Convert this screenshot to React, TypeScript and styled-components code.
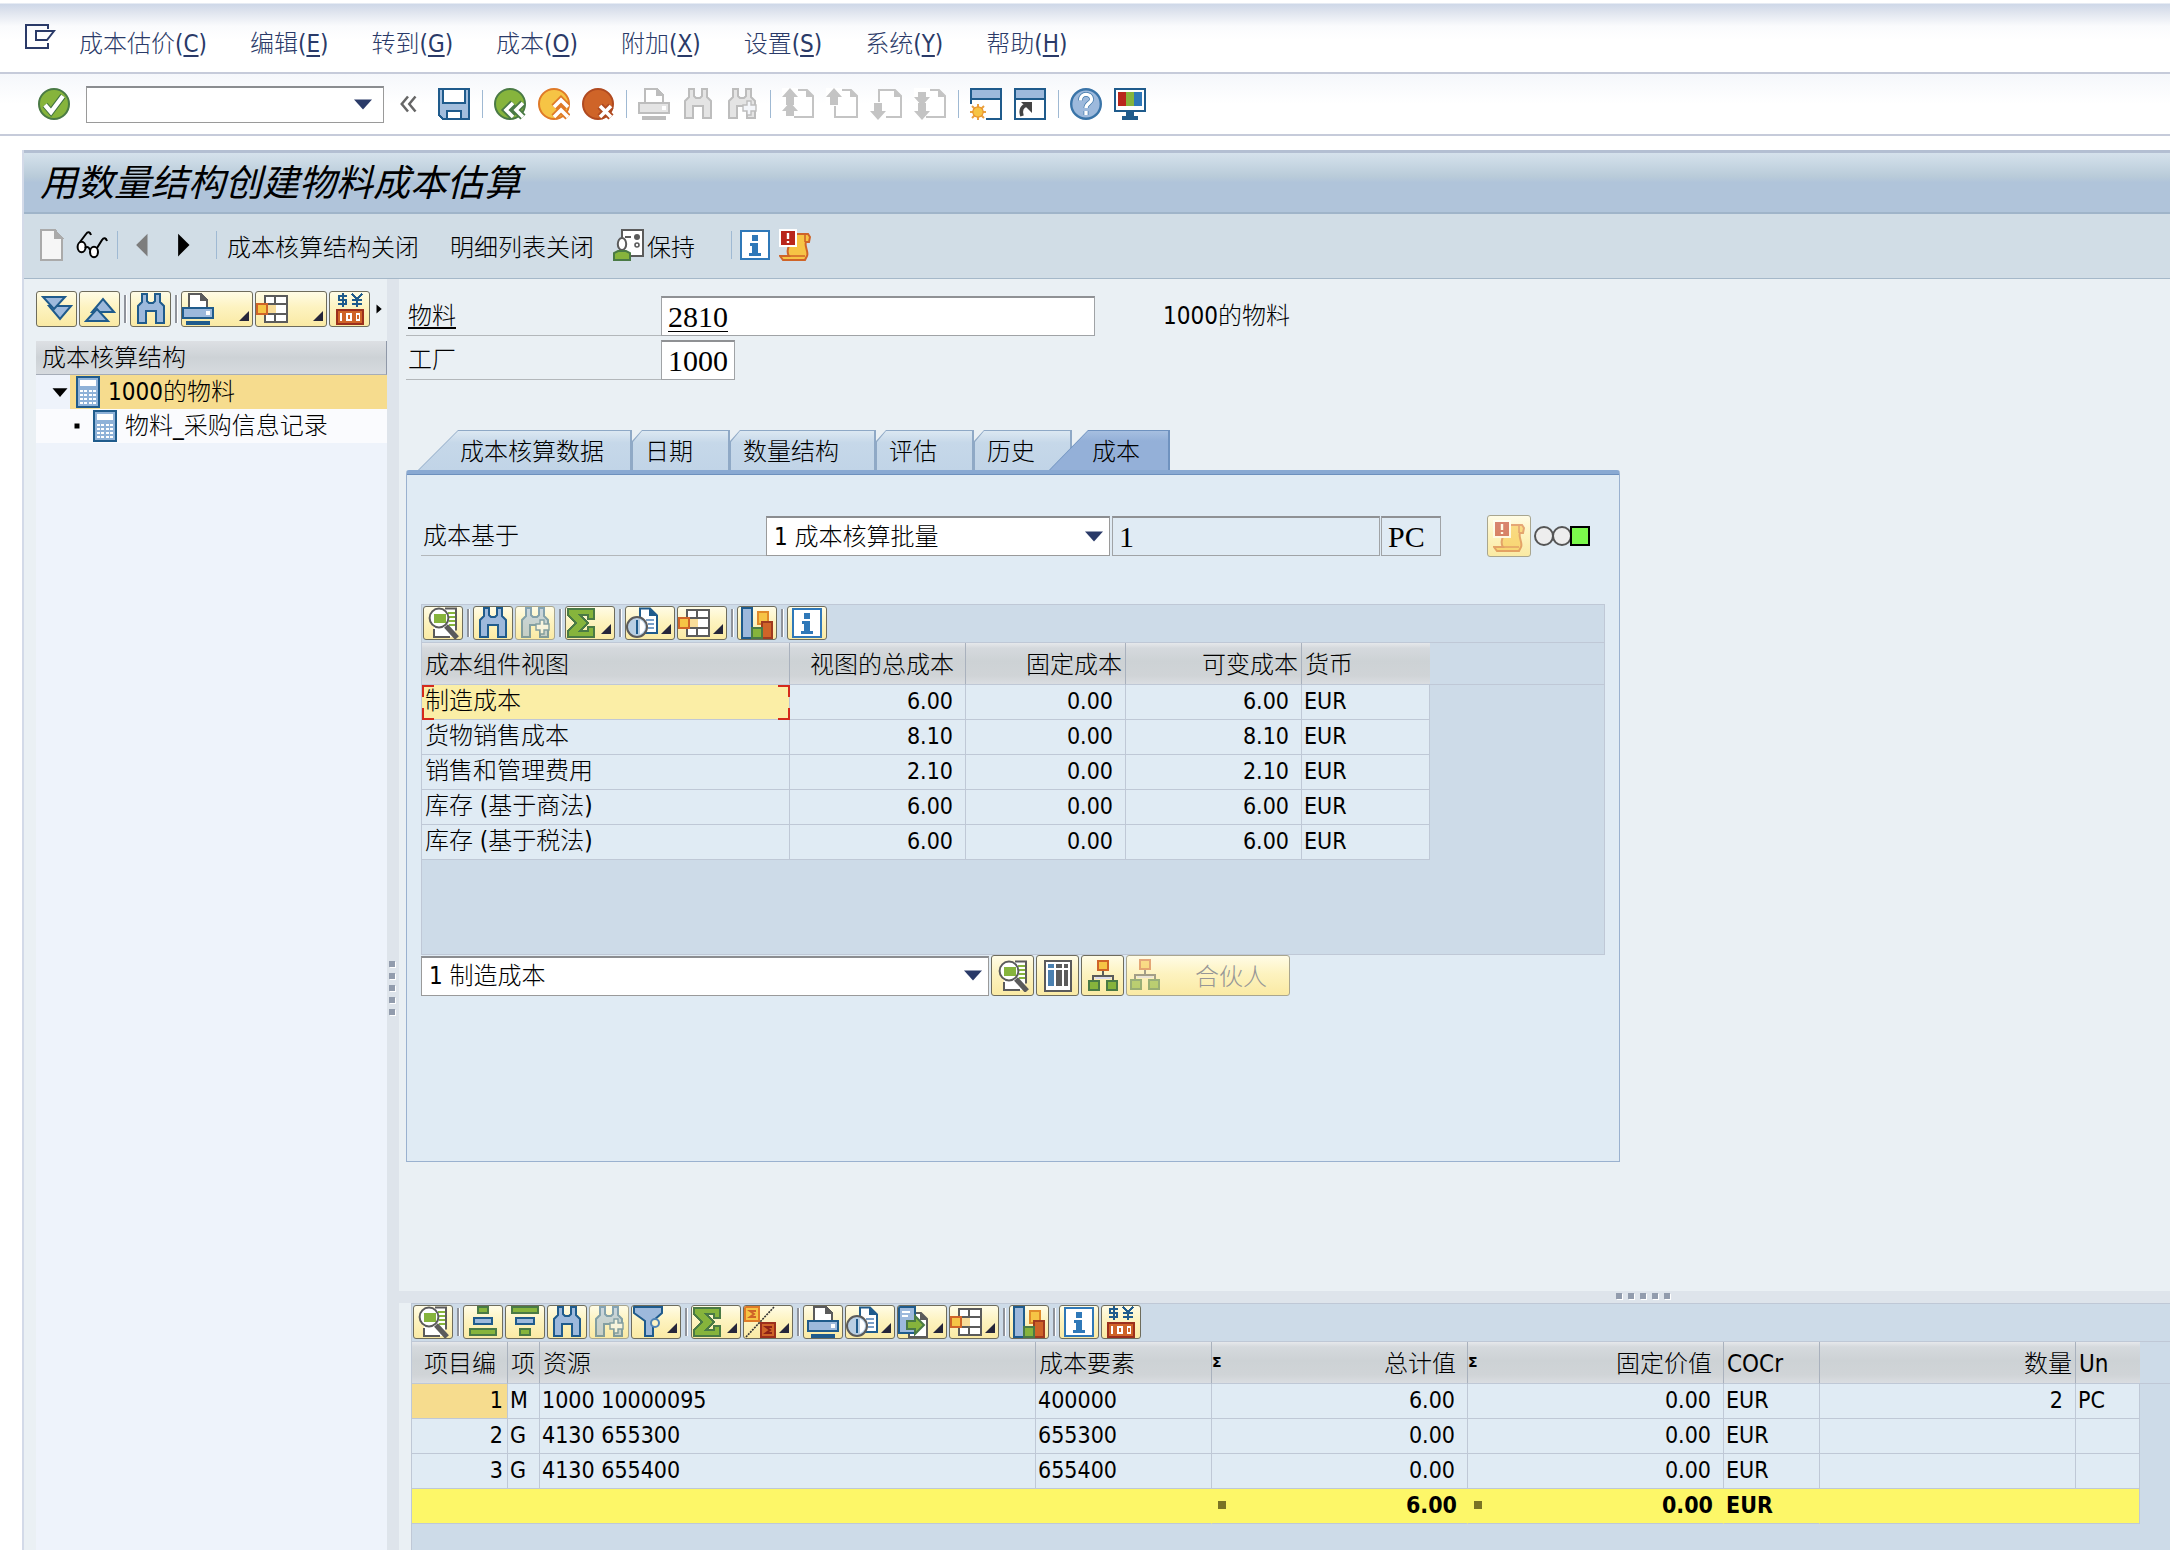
import React, { ReactNode } from 'react';
import styled, { createGlobalStyle, css } from 'styled-components';

const ui = `"DejaVu Sans Condensed", "Noto Sans CJK SC", sans-serif`;
const serif = `"Liberation Serif", "Noto Sans CJK SC", serif`;

const c = {
  page: '#eaf0f4',
  bar: '#d1dde6',
  grid: '#cddbe8',
  cell: '#e0ebf4',
  line: '#bfc8d6',
  split: '#dee4eb',
  navy: '#2a3a68',
  blue: '#1f5b8c',
  sky: '#9db9dc',
  dark: '#5b5b5b',
  green: '#86b43c',
  leaf: '#4a7a45',
  orange: '#cf6428',
  amber: '#f6c445',
  red: '#b9261c',
};

const Global = createGlobalStyle`
  * { box-sizing: border-box; }
  body { margin: 0; background: #fff; font-family: ${ui}; font-weight: 300; font-size: 24px; color: #000; }
  button, input, select { font: inherit; color: inherit; margin: 0; border-radius: 0; }
  button { padding: 0; border: 0; background: none; cursor: pointer; }
`;

/* ---------- icons, drawn on a 16 x 16 grid ---------- */

const Svg = styled.svg<{ $s: number }>`
  display: block;
  flex: none;
  width: ${p => p.$s}px;
  height: ${p => p.$s}px;
`;
type IconProps = { children?: ReactNode; size?: number; smooth?: boolean };
const Icon = ({ children, size = 32, smooth }: IconProps) => (
  <Svg $s={size} viewBox="0 0 16 16" fill="none" shapeRendering={smooth ? 'auto' : 'crispEdges'} aria-hidden="true">
    {children}
  </Svg>
);

const Binoculars = ({ a = c.blue, b = c.sky, plus }: { a?: string; b?: string; plus?: boolean }) => (
  <Icon smooth>
    <path d="M3.5.5h2.5v3.5l1 1h2l1-1v-3.5h2.5v4l2 2v8.500h-4v-6h-5v6h-4v-8.500l2-2z" fill={b} stroke={a} />
    {plus && <path d="M10.500 6.500h2v2h2.500v3h-2.500v2h-2v-2h-2v-3h2z" fill="#f4f6fa" stroke={a} strokeWidth=".7" />}
  </Icon>
);
const Printer = ({ a = c.blue, b = c.sky, p = c.dark }: { a?: string; b?: string; p?: string }) => (
  <Icon>
    <path d="M3.500 7V.5h6l3 3V7" fill="#fff" stroke={p} />
    <path d="M9 0l4 4H9z" fill={p} />
    <rect x=".5" y="7.500" width="15" height="5" fill={b} stroke={a} />
    <rect x="12" y="9" width="2" height="2" fill="#fff" />
    <rect x="2" y="14" width="12" height="2" fill={a} />
  </Icon>
);
const Details = () => (
  <Icon smooth>
    <path d="M3.500 9v6h9l1.500-3V1H8z" fill="#fff" />
    <path d="M3.500 11v4h8" stroke={c.dark} />
    <path d="M9 .7h5.500v11" stroke={c.dark} />
    <path d="M10.500 3H14M11 5h3M11 7h3M11 9h3" stroke={c.green} />
    <circle cx="6" cy="5.500" r="4.700" fill="#fff" stroke={c.dark} />
    <rect x="3.500" y="3.500" width="6" height="4.500" fill={c.green} />
    <path d="M9.500 9.500l5.500 6" stroke={c.dark} strokeWidth="2.600" />
  </Icon>
);
const Sum = () => (
  <Icon>
    <path d="M1 1h13v5h-3V4H7l4 4-4 4h4v-2h3v5H1v-3l4-4-4-4z" fill={c.green} stroke={c.leaf} />
  </Icon>
);
const Subtotal = () => (
  <Icon smooth>
    <rect x=".5" y=".5" width="7" height="7" fill={c.amber} stroke="#df7a28" />
    <path d="M6 2.500H3l2 1.500-2 1.500h3" stroke={c.orange} />
    <path d="M1 15.500L15 .5" stroke="#333" strokeWidth=".8" strokeDasharray="1 .5" />
    <rect x="8.500" y="8.500" width="7" height="7" fill={c.orange} stroke="#9c2f1c" />
    <path d="M14 10.500h-3l2 1.500-2 1.500h3" stroke="#8c2216" />
  </Icon>
);
const Preview = () => (
  <Icon smooth>
    <path d="M7 .7h5l3.500 3.500v8.800H7z" fill="#fff" stroke={c.blue} />
    <path d="M11.500.5l4 4h-4z" fill={c.blue} />
    <path d="M10 6.500h4M11 8.500h3M11 10.500h3" stroke="#7aa0c8" />
    <circle cx="5.500" cy="10" r="5" fill="#b9cfe4" stroke={c.dark} />
    <path d="M7 6.500c1.500.5 2.500 2 2.500 3.500S8.500 13 7 13.500z" fill="#fff" />
    <path d="M5.500 6.500v7" stroke={c.blue} />
  </Icon>
);
const Layout = () => (
  <Icon>
    <path d="M4.500 1.500h11v13h-11z" fill="#fff" stroke={c.dark} />
    <path d="M9.500 1v14M4 5.500h12M4 10.500h12M15.500 1v14" stroke={c.dark} />
    <rect x="6" y="6" width="4" height="4" fill="#f8dd9a" />
    <rect x=".5" y="5.500" width="5" height="5" fill={c.amber} stroke={c.orange} />
  </Icon>
);
const Chart = () => (
  <Icon>
    <rect x=".5" y=".5" width="5" height="15" fill={c.sky} stroke={c.blue} />
    <rect x="8.500" y="2.500" width="5" height="6" fill={c.amber} stroke="#e08a2a" />
    <rect x="10.500" y="7.500" width="5" height="8" fill={c.orange} stroke="#a03a20" />
    <rect x="5.500" y="10.500" width="5" height="5" fill={c.green} stroke={c.leaf} />
  </Icon>
);
const Info = () => (
  <Icon>
    <rect x="1" y="1" width="14" height="14" fill="#fff" stroke="#2f78b8" strokeWidth="1" />
    <rect x="6.500" y="3" width="3" height="3" fill="#2f78b8" />
    <path d="M5.500 7h4v5h1.500v1.500h-6V12h1.500V8.500h-1z" fill="#2f78b8" />
  </Icon>
);
const Currency = () => (
  <Icon>
    <path d="M6.500 1.500H2.500v2h3.500v2H2M4.500 0v7" stroke={c.blue} strokeWidth="1.200" />
    <path d="M9 .5l2.500 2.500L14 .5M11.500 3v4M9 3.500h5M9 5.500h5" stroke={c.blue} strokeWidth="1.200" />
    <rect x="1.500" y="8.500" width="13" height="7" fill={c.orange} stroke="#9c2f1c" />
    <path d="M3 14v-4h1v4zM6 14v-4h3v4zM11 14v-4h2v4z" fill="#fff" />
    <path d="M7.500 11v2M12 11v2" stroke={c.orange} />
  </Icon>
);
const SortUp = () => (
  <Icon>
    <rect x="5.500" y=".5" width="5" height="3" fill={c.green} stroke={c.leaf} />
    <rect x="3.500" y="6" width="9" height="3" fill={c.sky} stroke={c.blue} />
    <rect x="1.500" y="11.500" width="13" height="3" fill={c.green} stroke={c.leaf} />
  </Icon>
);
const SortDown = () => (
  <Icon>
    <rect x="1.500" y=".5" width="13" height="3" fill={c.green} stroke={c.leaf} />
    <rect x="3.500" y="6" width="9" height="3" fill={c.sky} stroke={c.blue} />
    <rect x="5.500" y="11.500" width="5" height="3" fill={c.green} stroke={c.leaf} />
  </Icon>
);
const Filter = () => (
  <Icon smooth>
    <path d="M1 .5h14v3l-4.500 4v7.500h-4V7.500L1 3.500z" fill={c.sky} stroke={c.blue} />
    <circle cx="11.500" cy="8.500" r="2" fill="#fdf3c4" stroke="#4f83b5" />
  </Icon>
);
const Export = () => (
  <Icon smooth>
    <path d="M5.500 3.500h6l3 3v9h-9z" fill="#fff" stroke={c.dark} />
    <path d="M11 3l4 4h-4z" fill={c.dark} />
    <path d="M.5.500h8v13h-8z" fill={c.sky} stroke={c.blue} />
    <path d="M2 3h4M2 5h3" stroke="#fff" />
    <path d="M4.500 7.500h4V5l4.500 4.500L8.500 14v-2.500h-4z" fill={c.green} stroke={c.leaf} />
  </Icon>
);
const DoubleTri = ({ up }: { up?: boolean }) => (
  <Icon smooth>
    <g transform={up ? 'matrix(1 0 0 -1 0 16)' : undefined} stroke={c.blue} fill={c.sky}>
      <path d="M4 6.500h11l-5.500 6.500z" />
      <path d="M1 2h11L6.500 8z" />
    </g>
  </Icon>
);
const ColumnsIcon = () => (
  <Icon>
    <rect x="1.500" y=".5" width="13" height="15" fill="#fff" stroke={c.dark} />
    <path d="M3 2h3v2H3zM3 5h3v8H3z" fill="#4a80b0" />
    <path d="M7 2h3v2H7zM11 2h2v2h-2zM7 5h3v8H7zM11 5h2v8h-2z" fill={c.dark} />
  </Icon>
);
const Hierarchy = () => (
  <Icon>
    <path d="M8 5v3M3 11V8h10v3" stroke={c.dark} />
    <path d="M4 9h8" stroke="#dcdcec" />
    <rect x="5.500" y=".5" width="5" height="4.500" fill={c.amber} stroke={c.orange} />
    <rect x="1" y="10.500" width="5" height="4.500" fill={c.green} stroke={c.leaf} />
    <rect x="10" y="10.500" width="5" height="4.500" fill={c.green} stroke={c.leaf} />
  </Icon>
);
const Scroll = () => (
  <Icon smooth>
    <path d="M6.500 2.500h8l1 1.500-.5 2.500h-1.500c-1 2 1.500 5 .5 7l-1 2H2l-1.500-2h4.500c-2-3 1-6 1.500-11z" fill={c.amber} stroke={c.orange} />
    <path d="M.5 13.500h12.500M13 3v3.500" stroke={c.orange} strokeWidth=".8" />
    <rect x="0" y="0" width="9" height="9" fill="#fff" />
    <rect x="1" y="1" width="7" height="7" fill={c.red} />
    <path d="M4.500 2v3M4.500 6v1" stroke="#fff" strokeWidth="1.200" />
  </Icon>
);
const Calculator = () => (
  <Icon>
    <rect x="2.500" y=".5" width="11" height="15" fill="#8fb2d8" stroke={c.blue} />
    <rect x="4" y="2" width="8" height="3" fill="#fff" />
    <path d="M4 7.500h8M4 9.500h8M4 11.500h8M4 13.500h8" stroke="#fff" strokeDasharray="1.400 .8" />
  </Icon>
);
const MenuMark = () => (
  <Icon smooth>
    <path d="M12 3.500V1.500H1v11.500h11v-2.500" stroke={c.navy} />
    <path d="M6 4.500h9l-3.500 4.500H6z" stroke={c.navy} />
  </Icon>
);
const Check = () => (
  <Icon smooth>
    <circle cx="8" cy="8" r="7.500" fill={c.green} stroke={c.leaf} />
    <path d="M3.500 8.500l3 3.500 6-8" stroke="#3f7040" strokeWidth="3.200" />
    <path d="M3.500 8.500l3 3.500 6-8" stroke="#fff" strokeWidth="2.200" />
  </Icon>
);
const Save = () => (
  <Icon>
    <path d="M.5.500h15v15H2.500l-2-2z" fill="#a3bedd" stroke={c.blue} />
    <rect x="2.500" y=".5" width="11" height="7" fill="#fff" stroke={c.blue} />
    <rect x="4.500" y="11.500" width="7" height="4" fill="#fff" stroke={c.blue} />
  </Icon>
);
type RoundProps = { fill: string; ring: string; mark: string };
const Round = ({ fill, ring, mark }: RoundProps) => (
  <Icon smooth>
    <circle cx="8" cy="8" r="7.500" fill={fill} stroke={ring} />
    <path d={mark} stroke={ring} strokeWidth="3.600" />
    <path d={mark} stroke="#fff" strokeWidth="1.800" />
  </Icon>
);
const Page = ({ up, down, both }: { up?: boolean; down?: boolean; both?: boolean }) => (
  <Icon smooth>
    <path d="M4.500 1h8l3 3v10.500h-11z" fill="#fff" stroke="#c4c4c4" />
    <path d="M12 .5l4 4h-4z" fill="#c4c4c4" />
    <rect x={0} y={up ? 0 : 7} width="8" height={both || down ? 9 : 9} fill="#fff" />
    {both && <rect x="0" y="0" width="8" height="16" fill="#fff" />}
    {up && <path d="M4 0l4 4.500H6v4H2v-4H0z" fill="#c4c4c4" />}
    {up && both && <path d="M4 7l4 4.500H6V14H2v-2.500H0z" fill="#c4c4c4" />}
    {down && <path d="M4 16l4-4.500H6v-4H2v4H0z" fill="#c4c4c4" />}
    {down && both && <path d="M4 9l4-4.500H6V2H2v2.500H0z" fill="#c4c4c4" />}
    {both && <path d="M6 14.500h6" stroke="#c4c4c4" />}
  </Icon>
);
const WindowIcon = ({ link }: { link?: boolean }) => (
  <Icon smooth>
    <rect x=".5" y=".5" width="15" height="15" fill="#fff" stroke={c.blue} />
    <rect x=".5" y=".5" width="15" height="5" fill={c.sky} stroke={c.blue} />
    {link ? (
      <>
        <path d="M4 14c-1-3 0-5 2.500-5.500" stroke="#444" strokeWidth="1.800" />
        <path d="M3.500 7H9v5.500z" fill="#444" />
      </>
    ) : (
      <>
        <rect x="0" y="8" width="8" height="8" fill="#fff" />
        <path d="M4 8v8M0 12h8M1 9l6 6M7 9l-6 6" stroke="#e9a040" />
        <circle cx="4" cy="12" r="2.600" fill={c.amber} stroke="#e9922c" strokeWidth=".6" />
      </>
    )}
  </Icon>
);
const Help = () => (
  <Icon smooth>
    <circle cx="8" cy="8" r="7.400" fill={c.sky} stroke="#3a74a8" strokeWidth="1.200" />
    <path d="M5.200 6.200c0-4 5.600-3.800 5.600-.6 0 2-2.800 2-2.800 4.400M8 11.500v2" stroke="#3a74a8" strokeWidth="2.400" />
    <path d="M5.200 6.200c0-4 5.600-3.800 5.600-.6 0 2-2.800 2-2.800 4.400M8 11.500v2" stroke="#fff" strokeWidth="1.700" />
  </Icon>
);
const Monitor = () => (
  <Icon>
    <rect x=".5" y=".5" width="15" height="11" fill="#fff" stroke={c.blue} />
    <rect x="2" y="2" width="4" height="7" fill={c.red} />
    <rect x="6" y="2" width="4" height="7" fill={c.green} />
    <rect x="10" y="2" width="4" height="7" fill="#2f78b8" />
    <path d="M6 12h4v2h2v2H4v-2h2z" fill={c.blue} />
  </Icon>
);
const NewDoc = () => (
  <Icon>
    <path d="M2.500.500h7l3.500 4.500v10.500h-10.500z" fill="#f6f6f6" stroke="#aaa" />
    <path d="M9 0l5 5H9z" fill="#aaa" />
  </Icon>
);
const Glasses = () => (
  <Icon smooth>
    <ellipse cx="2.800" cy="9" rx="2" ry="2.600" fill="#fff" stroke="#000" />
    <ellipse cx="9" cy="11.500" rx="2" ry="2.600" fill="#fff" stroke="#000" />
    <path d="M4.500 9.500c1-1 2-.5 2.500 1M2 6.500L5 2.500c1-1.500 2-1 2.500.5M10.500 9.500l2.500-4c1-1.500 2-1 2.500.5" stroke="#000" />
  </Icon>
);
const Hold = () => (
  <Icon smooth>
    <rect x="4.500" y=".5" width="10.500" height="13" fill="#fff" stroke={c.dark} />
    <path d="M6 4h3" stroke={c.dark} />
    <circle cx="12" cy="4" r="1.500" fill={c.dark} />
    <circle cx="12" cy="8" r="1" fill="#fff" stroke={c.dark} strokeWidth=".8" />
    <ellipse cx="4.500" cy="7.500" rx="2.100" ry="3" fill="#fff" stroke={c.dark} />
    <path d="M.5 15.500V12l2-1h4l2 1v3.500z" fill={c.green} stroke={c.leaf} />
  </Icon>
);
const Tri = ({ d, color, size }: { d: string; color: string; size: number }) => (
  <Icon smooth size={size}>
    <path d={d} fill={color} />
  </Icon>
);

/* ---------- shell ---------- */

const Shell = styled.div`
  min-height: 100vh;
  display: flex;
  flex-direction: column;
`;
const MenuBar = styled.nav`
  height: 74px;
  padding: 10px 24px 0;
  display: flex;
  align-items: center;
  background: linear-gradient(#fff 0 3px, #ced8e8 4px, #dfe4ee 12px, #fafbfd 26px, #fff 40px);
  border-bottom: 2px solid #c6cbda;
`;
const MenuIcon = styled.button`
  margin-right: 23px;
  padding-bottom: 6px;
`;
const MenuItem = styled.button`
  margin-right: 43px;
  color: ${c.navy};
  white-space: nowrap;
  u { text-underline-offset: 3px; text-decoration-thickness: 2px; }
`;
const SystemBar = styled.div`
  height: 62px;
  padding: 0 32px;
  display: flex;
  align-items: center;
  background: linear-gradient(#f5f7fb, #fff 30px);
  border-bottom: 2px solid #c6cbda;
`;
const SysButton = styled.button<{ $w?: number }>`
  width: ${p => p.$w ?? 44}px;
  height: 40px;
  display: grid;
  place-items: center;
  color: #666;
  &:disabled { cursor: default; }
`;
const Rule = styled.span<{ $w: number }>`
  width: ${p => p.$w}px;
  height: 28px;
  flex: none;
  background: linear-gradient(#9fb9d3, #9fb9d3) center / 1px 100% no-repeat;
`;
const Combo = styled.span<{ $w: number; $h?: number; $ml?: number; $inset?: number }>`
  display: grid;
  flex: none;
  width: ${p => p.$w}px;
  height: ${p => p.$h ?? 40}px;
  margin-left: ${p => p.$ml ?? 0}px;
  border: 1px solid #9a9a9a;
  border-top: 2px solid #8b8d90;
  background: #fff;
  align-items: center;
  & > * { grid-area: 1 / 1; }
  & > svg { justify-self: end; margin-right: ${p => p.$inset ?? 6}px; pointer-events: none; }
  select, input { width: 100%; height: 100%; border: 0; background: none; padding: 0 7px; appearance: none; outline: none; }
`;
const Frame = styled.div`
  flex: 1;
  margin: 14px 0 0 22px;
  border-left: 2px solid #d3dae8;
  display: flex;
  flex-direction: column;
`;
const Title = styled.h1`
  margin: 0;
  height: 64px;
  padding: 2px 16px 0;
  display: flex;
  align-items: center;
  border-top: 3px solid #b3bfd2;
  border-bottom: 2px solid #9fb4c9;
  background: linear-gradient(#d5e2ec, #b9cbd9 40%, #b0c4da 50%, #b0c4da);
  font: italic 400 37px/48px ${ui};
`;
const AppBar = styled.div`
  height: 65px;
  padding: 0 8px 2px;
  display: flex;
  align-items: center;
  background: ${c.bar};
  border-bottom: 1px solid #a5b8c9;
`;
const AppButton = styled.button<{ $w?: number; $gap?: number }>`
  display: flex;
  align-items: center;
  justify-content: ${p => (p.$w ? 'center' : 'flex-start')};
  gap: 2px;
  width: ${p => (p.$w ? `${p.$w}px` : 'auto')};
  margin-right: ${p => p.$gap ?? 0}px;
  white-space: nowrap;
`;
const Main = styled.div`
  flex: 1;
  display: flex;
  background: ${c.page};
`;
const Side = styled.aside`
  width: 363px;
  flex: none;
  padding: 12px 0 0 12px;
  display: flex;
  flex-direction: column;
`;
const VSplit = styled.div`
  width: 12px;
  flex: none;
  padding: 682px 0 0 2px;
  display: flex;
  flex-direction: column;
  gap: 6px;
  background: ${c.split};
`;
const HSplit = styled.div`
  height: 12px;
  flex: none;
  padding: 2px 0 0 1217px;
  display: flex;
  gap: 6px;
  background: ${c.split};
`;
const Dot = styled.i`
  width: 6px;
  height: 6px;
  background: #929cad;
  box-shadow: 1px 1px 0 #fff;
`;
const Work = styled.main`
  flex: 1;
  min-width: 0;
  display: flex;
  flex-direction: column;
`;

/* ---------- yellow buttons ---------- */

const Tools = styled.div`
  display: flex;
  align-items: center;
  gap: 2px;
`;
const Yellow = styled.button<{ $w: number; $h: number; $split?: boolean }>`
  position: relative;
  width: ${p => p.$w}px;
  height: ${p => p.$h}px;
  flex: none;
  overflow: hidden;
  display: flex;
  align-items: center;
  justify-content: ${p => (p.$split ? 'flex-start' : 'center')};
  border: 1px solid #6e6c5c;
  border-radius: 3px;
  background: linear-gradient(#fffce6, #fdf3c0 45%, #faeaa4);
  ${p => p.$split && css`
    &::after {
      content: '';
      position: absolute;
      right: 3px;
      bottom: 5px;
      border: 5px solid transparent;
      border-right-color: #26263a;
      border-bottom-color: #26263a;
    }
  `}
  &:disabled { border-color: #a9a68f; color: #969696; cursor: default; }
  &:disabled > svg { opacity: 0.55; }
`;
const Partner = styled(Yellow)`
  justify-content: flex-start;
  gap: 34px;
  padding: 0 0 2px 2px;
`;
const Sep = styled.span`
  width: 6px;
  height: 28px;
  flex: none;
  background: linear-gradient(90deg, #8f939b 2px, #fff 2px) center / 3px 100% no-repeat;
`;

type Tool = { name: string; icon?: ReactNode; split?: boolean; off?: boolean };
const SEP: Tool = { name: '' };
type ToolbarProps = { items: Tool[]; w: number; sw: number; h: number };
const Toolbar = ({ items, w, sw, h }: ToolbarProps) => (
  <>
    {items.map((t, i) =>
      t.icon ? (
        <Yellow key={i} type="button" aria-label={t.name} $w={t.split ? sw : w} $h={h} $split={t.split} disabled={t.off}>
          {t.icon}
        </Yellow>
      ) : (
        <Sep key={i} />
      ),
    )}
  </>
);

/* ---------- tree ---------- */

const TreeHead = styled.div`
  height: 34px;
  margin-top: 14px;
  padding-left: 6px;
  line-height: 34px;
  background: linear-gradient(#dde0e4, #cdd2d6 50%, #d6dade);
  border-right: 1px solid #8f98a8;
  border-bottom: 1px solid #a6adb8;
`;
const Tree = styled.ul`
  margin: 0;
  padding: 0;
  list-style: none;
  flex: 1;
  background: #eef3fb;
`;
const TreeRow = styled.li<{ $level: number; $on?: boolean }>`
  height: 34px;
  display: flex;
  align-items: center;
  padding-left: ${p => 14 + p.$level * 17}px;
  gap: 2px;
  background: ${p => (p.$on ? 'linear-gradient(90deg, #eef3fb 34px, #f6dc8e 34px)' : '#fafbfe')};
`;
const TreeText = styled.span`
  margin-left: 2px;
  line-height: 34px;
  white-space: nowrap;
`;

/* ---------- form ---------- */

const Top = styled.section`
  padding: 17px 7px 129px;
`;
const Row = styled.div<{ $mb: number }>`
  height: 40px;
  margin-bottom: ${p => p.$mb}px;
  display: flex;
`;
const Label = styled.label<{ $w: number; $u?: boolean }>`
  width: ${p => p.$w}px;
  flex: none;
  padding-left: 2px;
  line-height: 40px;
  border-bottom: 1px solid #b3b7ba;
  ${p => p.$u && 'text-decoration: underline; text-decoration-thickness: 2px; text-underline-offset: 3px;'}
`;
const Field = styled.input<{ $w: number; $u?: boolean; $gap?: number }>`
  width: ${p => p.$w}px;
  margin-left: ${p => p.$gap ?? 0}px;
  height: 40px;
  padding: 0 6px;
  border: 1px solid #a0a3a6;
  border-top: 2px solid #8f9194;
  outline: none;
  background: #fff;
  font-family: ${serif};
  font-size: 30px;
  font-weight: 400;
  ${p => p.$u && 'text-decoration: underline; text-decoration-thickness: 1px; text-underline-offset: 4px;'}
  &:read-only { background: transparent; }
`;
const Note = styled.span`
  margin-left: 68px;
  line-height: 40px;
`;

/* ---------- tabs ---------- */

const TabList = styled.div`
  height: 40px;
  padding-left: 12px;
  display: flex;
`;
type TabShape = 'first' | 'mid' | 'active';
const shapes: Record<TabShape, { outer: string; inner: string; pad: string }> = {
  first: {
    outer: 'polygon(0 100%, 40px 0, 100% 0, 100% 100%)',
    inner: 'polygon(0 100%, 39px 0, 100% 0, 100% 100%)',
    pad: '0 28px 2px 42px',
  },
  mid: {
    outer: 'polygon(0 11px, 10px 0, 100% 0, 100% 100%, 0 100%)',
    inner: 'polygon(0 11px, 9px 0, 100% 0, 100% 100%, 0 100%)',
    pad: '0 37px 2px 13px',
  },
  active: {
    outer: 'polygon(0 100%, 39px 0, 100% 0, 100% 100%)',
    inner: 'polygon(0 100%, 38px 0, 100% 0, 100% 100%)',
    pad: '0 30px 2px 43px',
  },
};
const Tab = styled.button<{ $shape: TabShape }>`
  position: relative;
  z-index: 0;
  height: 40px;
  padding: ${p => shapes[p.$shape].pad};
  margin-left: ${p => (p.$shape === 'active' ? '-23px' : '0')};
  white-space: nowrap;
  &::before, &::after {
    content: '';
    position: absolute;
    z-index: -1;
    inset: 0;
    background: ${p => (p.$shape === 'active' ? '#6f92bf' : '#8fa9c6')};
    clip-path: ${p => shapes[p.$shape].outer};
  }
  &::after {
    inset: 1px 2px 0 1px;
    background: ${p => (p.$shape === 'active' ? 'linear-gradient(#a6bfe0, #94b0d8 25%)' : 'linear-gradient(#dce8f2, #c6d8e9 30%, #c1d4e7)')};
    clip-path: ${p => shapes[p.$shape].inner};
  }
`;
const Panel = styled.div`
  width: 1214px;
  max-width: 100%;
  min-height: 692px;
  padding: 42px 14px 0;
  border: 1px solid #9ab1cf;
  border-top: 4px solid #89a9d2;
  box-shadow: inset 0 1px 0 #6d90bd;
  border-radius: 3px 3px 0 0;
  background: ${c.cell};
`;
const Alert = styled.span`
  margin-left: 46px;
  display: flex;
  align-items: center;
  gap: 3px;
`;
const Lights = styled.svg`
  width: 58px;
  height: 24px;
`;

/* ---------- grids ---------- */

const Grid = styled.section<{ $grow?: boolean }>`
  border: 1px solid ${c.line};
  ${p => (p.$grow ? 'flex: 1; margin-left: 12px; border-right: 0; border-bottom: 0;' : 'min-height: 351px;')}
  background: ${c.grid};
`;
const GridBar = styled(Tools)`
  height: 38px;
  padding: 0 1px 1px;
  border-bottom: 1px solid ${c.line};
`;
const GridBody = styled.div`
  display: flex;
`;
const Filler = styled.div`
  flex: 1;
  height: 42px;
  border-bottom: 1px solid ${c.line};
`;
const Table = styled.table`
  width: min-content;
  flex: none;
  table-layout: fixed;
  border-collapse: separate;
  border-spacing: 0;
`;
const Th = styled.th<{ $r?: number }>`
  position: relative;
  height: 42px;
  padding: 2px ${p => p.$r ?? 0}px 0 3px;
  text-align: ${p => (p.$r !== undefined ? 'right' : 'left')};
  font: 300 24px/38px ${ui};
  white-space: nowrap;
  overflow: hidden;
  background: linear-gradient(#e6e8eb, #d5d9dd 5px, #cdd2d5 45%, #d0d4d7 80%, #dadde1);
  border-right: 1px solid #a9b1bd;
  border-bottom: 1px solid ${c.line};
  &:last-child { border-right: 0; }
`;
const Sigma = styled.b`
  position: absolute;
  left: 0;
  top: 4px;
  font-family: "DejaVu Sans", sans-serif;
  font-size: 14px;
  font-weight: 700;
  line-height: 32px;
`;
const Td = styled.td<{ $r?: number; $mark?: 'cell' | 'row' }>`
  position: relative;
  height: 35px;
  padding: 0 ${p => p.$r ?? 0}px 2px 2px;
  text-align: ${p => (p.$r !== undefined ? 'right' : 'left')};
  font: 400 23px/30px ${ui};
  white-space: nowrap;
  background: ${p => (p.$mark === 'cell' ? '#fbeea6' : p.$mark === 'row' ? '#f6dc8e' : c.cell)};
  border-right: 1px solid ${c.line};
  border-bottom: 1px solid ${c.line};
`;
const NameTd = styled(Td)`
  padding-left: 3px;
  font: 300 24px/30px ${ui};
`;
const TotalTd = styled(Td)`
  background: #fdf768;
  font-weight: 700;
  border-right-color: #fdf768;
  &:last-child { border-right-color: ${c.line}; }
`;
const Square = styled.i`
  position: absolute;
  left: 6px;
  top: 12px;
  width: 8px;
  height: 8px;
  background: #7a7424;
`;
const Corners = styled.span`
  position: absolute;
  inset: 0 -1px -1px 0;
  --r: linear-gradient(#d42a1c, #d42a1c);
  background:
    var(--r) 0 0 / 12px 2px, var(--r) 0 0 / 2px 12px,
    var(--r) 100% 0 / 12px 2px, var(--r) 100% 0 / 2px 12px,
    var(--r) 0 100% / 12px 2px, var(--r) 0 100% / 2px 12px,
    var(--r) 100% 100% / 12px 2px, var(--r) 100% 100% / 2px 12px;
  background-repeat: no-repeat;
`;

/* ---------- data ---------- */

const menus = [
  ['成本估价', 'C'], ['编辑', 'E'], ['转到', 'G'], ['成本', 'O'],
  ['附加', 'X'], ['设置', 'S'], ['系统', 'Y'], ['帮助', 'H'],
];
const tabs: [string, TabShape][] = [
  ['成本核算数据', 'first'], ['日期', 'mid'], ['数量结构', 'mid'],
  ['评估', 'mid'], ['历史', 'mid'], ['成本', 'active'],
];
const views = [
  ['制造成本', '6.00', '0.00', '6.00'],
  ['货物销售成本', '8.10', '0.00', '8.10'],
  ['销售和管理费用', '2.10', '0.00', '2.10'],
  ['库存 (基于商法)', '6.00', '0.00', '6.00'],
  ['库存 (基于税法)', '6.00', '0.00', '6.00'],
];
const items = [
  ['1', 'M', '1000 10000095', '400000', '6.00', '0.00', '2', 'PC'],
  ['2', 'G', '4130 655300', '655300', '0.00', '0.00', '', ''],
  ['3', 'G', '4130 655400', '655400', '0.00', '0.00', '', ''],
];
const viewCols = [368, 176, 160, 176, 128];
const itemCols = [96, 32, 496, 176, 256, 256, 96, 256, 64];

const sideTools: Tool[] = [
  { name: '展开', icon: <DoubleTri /> },
  { name: '折叠', icon: <DoubleTri up /> },
  SEP,
  { name: '查找', icon: <Binoculars /> },
  SEP,
  { name: '打印', icon: <Printer />, split: true },
  { name: '格式', icon: <Layout />, split: true },
  { name: '货币', icon: <Currency /> },
];
const viewTools: Tool[] = [
  { name: '明细', icon: <Details /> },
  SEP,
  { name: '查找', icon: <Binoculars /> },
  { name: '查找下一个', icon: <Binoculars plus />, off: true },
  SEP,
  { name: '合计', icon: <Sum />, split: true },
  SEP,
  { name: '预览', icon: <Preview />, split: true },
  { name: '格式', icon: <Layout />, split: true },
  SEP,
  { name: '图形', icon: <Chart /> },
  SEP,
  { name: '信息', icon: <Info /> },
];
const itemTools: Tool[] = [
  { name: '明细', icon: <Details /> },
  SEP,
  { name: '升序', icon: <SortUp /> },
  { name: '降序', icon: <SortDown /> },
  { name: '查找', icon: <Binoculars /> },
  { name: '查找下一个', icon: <Binoculars plus />, off: true },
  { name: '过滤', icon: <Filter />, split: true },
  SEP,
  { name: '合计', icon: <Sum />, split: true },
  { name: '小计', icon: <Subtotal />, split: true },
  SEP,
  { name: '打印', icon: <Printer /> },
  { name: '预览', icon: <Preview />, split: true },
  { name: '导出', icon: <Export />, split: true },
  { name: '格式', icon: <Layout />, split: true },
  SEP,
  { name: '图形', icon: <Chart /> },
  SEP,
  { name: '信息', icon: <Info /> },
  { name: '货币', icon: <Currency /> },
];

const GRAY = '#bdbdbd';
const PALE = '#e4e4e4';
const Arrow = () => <Tri d="M0 3h16L8 12z" color={c.navy} size={18} />;
const Dots = () => <>{[0, 1, 2, 3, 4].map(i => <Dot key={i} />)}</>;
const Cols = ({ w }: { w: number[] }) => (
  <colgroup>{w.map((x, i) => <col key={i} style={{ width: x }} />)}</colgroup>
);

const SystemToolbar = () => (
  <SystemBar>
    <SysButton aria-label="回车"><Check /></SysButton>
    <Combo $w={298} $h={37} $ml={10} $inset={11}>
      <input aria-label="命令" />
      <Arrow />
    </Combo>
    <SysButton aria-label="收起" $w={48}>
      <Icon size={20} smooth><path d="M8 2L3 8l5 6M14 2L9 8l5 6" stroke="#666" strokeWidth="2" /></Icon>
    </SysButton>
    <SysButton aria-label="保存"><Save /></SysButton>
    <Rule $w={12} />
    <SysButton aria-label="返回">
      <Round fill={c.green} ring={c.leaf} mark="M9.500 7.500L6 11l3.500 3.500M14.500 7.500L11 11l3.500 3.500" />
    </SysButton>
    <SysButton aria-label="退出">
      <Round fill={c.amber} ring="#df7a28" mark="M8 9.500L11.500 6 15 9.500M8 14.500l3.500-3.500 3.500 3.500" />
    </SysButton>
    <SysButton aria-label="取消">
      <Round fill={c.orange} ring="#b04a20" mark="M9 9l5.500 5.500M14.500 9L9 14.500" />
    </SysButton>
    <Rule $w={12} />
    <SysButton aria-label="打印" disabled><Printer a={GRAY} b={PALE} p={GRAY} /></SysButton>
    <SysButton aria-label="查找" disabled><Binoculars a={GRAY} b={PALE} /></SysButton>
    <SysButton aria-label="继续查找" disabled><Binoculars a={GRAY} b={PALE} plus /></SysButton>
    <Rule $w={12} />
    <SysButton aria-label="首页" disabled><Page up both /></SysButton>
    <SysButton aria-label="上一页" disabled><Page up /></SysButton>
    <SysButton aria-label="下一页" disabled><Page down /></SysButton>
    <SysButton aria-label="末页" disabled><Page down both /></SysButton>
    <Rule $w={12} />
    <SysButton aria-label="新建会话"><WindowIcon /></SysButton>
    <SysButton aria-label="快捷方式"><WindowIcon link /></SysButton>
    <Rule $w={12} />
    <SysButton aria-label="帮助"><Help /></SysButton>
    <SysButton aria-label="布局"><Monitor /></SysButton>
  </SystemBar>
);

const ViewGrid = () => (
  <Grid>
    <GridBar><Toolbar items={viewTools} w={40} sw={50} h={34} /></GridBar>
    <GridBody>
      <Table>
        <Cols w={viewCols} />
        <thead>
          <tr>
            <Th>成本组件视图</Th>
            <Th $r={11}>视图的总成本</Th>
            <Th $r={3}>固定成本</Th>
            <Th $r={3}>可变成本</Th>
            <Th>货币</Th>
          </tr>
        </thead>
        <tbody>
          {views.map((v, i) => (
            <tr key={v[0]}>
              <NameTd $mark={i === 0 ? 'cell' : undefined}>{v[0]}{i === 0 && <Corners />}</NameTd>
              {v.slice(1).map((n, k) => <Td key={k} $r={12}>{n}</Td>)}
              <Td>EUR</Td>
            </tr>
          ))}
        </tbody>
      </Table>
      <Filler />
    </GridBody>
  </Grid>
);

const ItemGrid = () => (
  <Grid $grow>
    <GridBar><Toolbar items={itemTools} w={40} sw={50} h={34} /></GridBar>
    <GridBody>
      <Table>
        <Cols w={itemCols} />
        <thead>
          <tr>
            <Th $r={11}>项目编</Th>
            <Th>项</Th>
            <Th>资源</Th>
            <Th>成本要素</Th>
            <Th $r={11}><Sigma>Σ</Sigma>总计值</Th>
            <Th $r={11}><Sigma>Σ</Sigma>固定价值</Th>
            <Th>COCr</Th>
            <Th $r={3}>数量</Th>
            <Th>Un</Th>
          </tr>
        </thead>
        <tbody>
          {items.map((r, i) => (
            <tr key={r[0]}>
              <Td $r={4} $mark={i === 0 ? 'row' : undefined}>{r[0]}</Td>
              <Td>{r[1]}</Td>
              <Td>{r[2]}</Td>
              <Td>{r[3]}</Td>
              <Td $r={12}>{r[4]}</Td>
              <Td $r={12}>{r[5]}</Td>
              <Td>EUR</Td>
              <Td $r={12}>{r[6]}</Td>
              <Td>{r[7]}</Td>
            </tr>
          ))}
          <tr>
            <TotalTd colSpan={4} />
            <TotalTd $r={10}><Square />6.00</TotalTd>
            <TotalTd $r={10}><Square />0.00</TotalTd>
            <TotalTd>EUR</TotalTd>
            <TotalTd colSpan={2} />
          </tr>
        </tbody>
      </Table>
      <Filler />
    </GridBody>
  </Grid>
);

export default function App() {
  return (
    <Shell>
      <Global />
      <MenuBar>
        <MenuIcon type="button" aria-label="菜单"><MenuMark /></MenuIcon>
        {menus.map(([t, k]) => (
          <MenuItem key={t} type="button">{t}(<u>{k}</u>)</MenuItem>
        ))}
      </MenuBar>
      <SystemToolbar />
      <Frame>
        <Title>用数量结构创建物料成本估算</Title>
        <AppBar>
          <AppButton $w={40} aria-label="新建"><NewDoc /></AppButton>
          <AppButton $w={40} aria-label="显示"><Glasses /></AppButton>
          <Rule $w={10} />
          <AppButton $w={38} aria-label="上一个"><Tri d="M12 1v14L5 8z" color="#7d7d7d" size={26} /></AppButton>
          <AppButton $w={46} aria-label="下一个"><Tri d="M5 1v14l7-7z" color="#000" size={26} /></AppButton>
          <Rule $w={21} />
          <AppButton $gap={31}>成本核算结构关闭</AppButton>
          <AppButton $gap={19}>明细列表关闭</AppButton>
          <AppButton $gap={31}><Hold />保持</AppButton>
          <Rule $w={10} />
          <AppButton $w={38} aria-label="信息"><Info /></AppButton>
          <AppButton $w={42} aria-label="日志"><Scroll /></AppButton>
        </AppBar>
        <Main>
          <Side>
            <Tools>
              <Toolbar items={sideTools} w={41} sw={72} h={36} />
              <Tri d="M6 2v12l7-6z" color="#000" size={12} />
            </Tools>
            <TreeHead>成本核算结构</TreeHead>
            <Tree>
              <TreeRow $level={0} $on>
                <Tri d="M2 5h12L8 12z" color="#000" size={20} />
                <Calculator />
                <TreeText>1000的物料</TreeText>
              </TreeRow>
              <TreeRow $level={1}>
                <Tri d="M6 6h4v4H6z" color="#000" size={20} />
                <Calculator />
                <TreeText>物料_采购信息记录</TreeText>
              </TreeRow>
            </Tree>
          </Side>
          <VSplit><Dots /></VSplit>
          <Work>
            <Top>
              <Row $mb={4}>
                <Label htmlFor="material" $w={255} $u>物料</Label>
                <Field id="material" defaultValue="2810" $w={434} $u />
                <Note>1000的物料</Note>
              </Row>
              <Row $mb={50}>
                <Label htmlFor="plant" $w={255}>工厂</Label>
                <Field id="plant" defaultValue="1000" $w={74} />
              </Row>
              <TabList role="tablist">
                {tabs.map(([t, s]) => (
                  <Tab key={t} type="button" role="tab" aria-selected={s === 'active'} $shape={s}>{t}</Tab>
                ))}
              </TabList>
              <Panel>
                <Row $mb={48}>
                  <Label htmlFor="basis" $w={345}>成本基于</Label>
                  <Combo $w={344}>
                    <select id="basis"><option>1 成本核算批量</option></select>
                    <Arrow />
                  </Combo>
                  <Field aria-label="批量" defaultValue="1" readOnly $w={268} $gap={2} />
                  <Field aria-label="单位" defaultValue="PC" readOnly $w={60} $gap={1} />
                  <Alert>
                    <Yellow type="button" aria-label="日志" $w={44} $h={42} disabled><Scroll /></Yellow>
                    <Lights viewBox="0 0 58 24" aria-hidden="true">
                      <circle cx="10" cy="12" r="9" fill="#ededed" stroke="#555" strokeWidth="2" />
                      <circle cx="28" cy="12" r="9" fill="#ededed" stroke="#555" strokeWidth="2" />
                      <rect x="37" y="3" width="18" height="18" fill="#7cf94c" stroke="#000" strokeWidth="2" />
                    </Lights>
                  </Alert>
                </Row>
                <ViewGrid />
                <Tools>
                  <Combo $w={568}>
                    <select aria-label="成本组件视图"><option>1 制造成本</option></select>
                    <Arrow />
                  </Combo>
                  <Yellow type="button" aria-label="明细" $w={43} $h={41}><Details /></Yellow>
                  <Yellow type="button" aria-label="列" $w={43} $h={41}><ColumnsIcon /></Yellow>
                  <Yellow type="button" aria-label="层次" $w={43} $h={41}><Hierarchy /></Yellow>
                  <Partner type="button" $w={164} $h={41} disabled><Hierarchy /><span>合伙人</span></Partner>
                </Tools>
              </Panel>
            </Top>
            <HSplit><Dots /></HSplit>
            <ItemGrid />
          </Work>
        </Main>
      </Frame>
    </Shell>
  );
}
